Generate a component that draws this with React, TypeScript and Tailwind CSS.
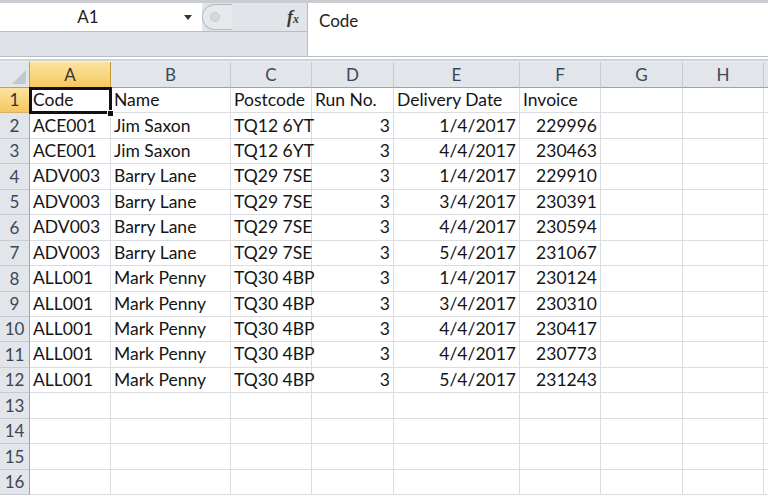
import React from "react";

type Row = {
  code: string;
  name: string;
  post: string;
  run: string;
  date: string;
  inv: string;
};

const cols = [
  { key: "A", w: "w-[81px]" },
  { key: "B", w: "w-[120px]" },
  { key: "C", w: "w-[81px]" },
  { key: "D", w: "w-[82px]" },
  { key: "E", w: "w-[126px]" },
  { key: "F", w: "w-[81px]" },
  { key: "G", w: "w-[82px]" },
  { key: "H", w: "w-[81px]" },
];

const data: Row[] = [
  { code: "ACE001", name: "Jim Saxon", post: "TQ12 6YT", run: "3", date: "1/4/2017", inv: "229996" },
  { code: "ACE001", name: "Jim Saxon", post: "TQ12 6YT", run: "3", date: "4/4/2017", inv: "230463" },
  { code: "ADV003", name: "Barry Lane", post: "TQ29 7SE", run: "3", date: "1/4/2017", inv: "229910" },
  { code: "ADV003", name: "Barry Lane", post: "TQ29 7SE", run: "3", date: "3/4/2017", inv: "230391" },
  { code: "ADV003", name: "Barry Lane", post: "TQ29 7SE", run: "3", date: "4/4/2017", inv: "230594" },
  { code: "ADV003", name: "Barry Lane", post: "TQ29 7SE", run: "3", date: "5/4/2017", inv: "231067" },
  { code: "ALL001", name: "Mark Penny", post: "TQ30 4BP", run: "3", date: "1/4/2017", inv: "230124" },
  { code: "ALL001", name: "Mark Penny", post: "TQ30 4BP", run: "3", date: "3/4/2017", inv: "230310" },
  { code: "ALL001", name: "Mark Penny", post: "TQ30 4BP", run: "3", date: "4/4/2017", inv: "230417" },
  { code: "ALL001", name: "Mark Penny", post: "TQ30 4BP", run: "3", date: "4/4/2017", inv: "230773" },
  { code: "ALL001", name: "Mark Penny", post: "TQ30 4BP", run: "3", date: "5/4/2017", inv: "231243" },
];

function Cell({ w, right, children }: { w: string; right?: boolean; children?: React.ReactNode }) {
  return (
    <div
      className={`${w} shrink-0 h-full border-r border-b border-[#dadcdf] flex items-center px-[3px] whitespace-nowrap ${
        right ? "justify-end" : "justify-start"
      }`}
    >
      {children}
    </div>
  );
}

function RowHead({ n, active }: { n: number; active?: boolean }) {
  return (
    <div
      className={`w-[30px] shrink-0 h-full flex items-center justify-center border-r border-b text-[17px] ${
        active
          ? "bg-gradient-to-b from-[#fbe3a0] to-[#f5c85c] border-r-[#c29a3c] border-b-[#d8b160] text-[#333]"
          : "bg-[#e2e5e9] border-r-[#9aa3ad] border-b-[#c6cbd1] text-[#3b4858]"
      }`}
    >
      {n}
    </div>
  );
}

export default function App() {
  const rows: (Row | null)[] = [
    { code: "Code", name: "Name", post: "Postcode", run: "Run No.", date: "Delivery Date", inv: "Invoice" },
    ...data,
    null,
    null,
    null,
    null,
  ];

  return (
    <div className="w-[768px] h-[499px] overflow-hidden bg-white flex flex-col text-[#151515] font-['Lato',sans-serif] text-[17.5px]">
      <div className="h-[3px] bg-[#c9cdd2] shrink-0" />

      {/* formula bar */}
      <div className="h-[54px] flex shrink-0 border-b border-[#b7bdc4]">
        <div className="w-[308px] flex flex-col shrink-0 border-r border-[#b7bdc4]">
          <div className="h-[29px] flex border-b border-[#b7bdc4]">
            <div className="w-[202px] bg-white flex items-center relative">
              <span className="w-[176px] text-center text-[17px] text-[#222]">A1</span>
              <span className="absolute left-[184px] top-[12px] w-0 h-0 border-l-[4px] border-r-[4px] border-t-[5px] border-l-transparent border-r-transparent border-t-[#333]" />
            </div>
            <div className="flex-1 bg-[#e1e4e8] flex items-center">
              <div className="h-[26px] w-[30px] rounded-l-full border-l border-t border-b border-[#b4bac2] bg-[#e6e9ec] flex items-center pl-[7px]">
                <div className="w-[10px] h-[10px] rounded-full bg-[#d4d8dd] border border-[#c6cbd1]" />
              </div>
              <div className="flex-1 flex justify-end pr-[8px]">
                <span className="font-['Liberation_Serif',serif] italic font-bold text-[18px] text-[#3a3a3a] leading-none">
                  f<span className="text-[12px]">x</span>
                </span>
              </div>
            </div>
          </div>
          <div className="flex-1 bg-[#dfe2e7]" />
        </div>
        <div className="flex-1 bg-white pl-[11px] pt-[5px] text-[17px] text-[#222]">Code</div>
      </div>
      <div className="h-[2px] bg-white shrink-0" />
      <div className="h-[2px] bg-[#cfd3d8] shrink-0" />
      <div className="h-[1px] bg-[#eef0f2] shrink-0" />

      {/* column headers */}
      <div className="h-[26px] flex shrink-0 text-[17px]">
        <div className="w-[30px] shrink-0 bg-[#e2e5e9] border-r border-b border-r-[#9aa3ad] border-b-[#9aa3ad] relative">
          <svg className="absolute right-[3px] bottom-[3px]" width="14" height="14" viewBox="0 0 14 14">
            <polygon points="14,0 14,14 0,14" fill="#c3c8ce" />
          </svg>
        </div>
        {cols.map((c) => (
          <div
            key={c.key}
            className={`${c.w} shrink-0 flex items-center justify-center border-r border-b ${
              c.key === "A"
                ? "bg-gradient-to-b from-[#fbe3a0] to-[#f5c85c] border-r-[#c29a3c] border-b-[#c29a3c] text-[#333]"
                : "bg-[#e2e5e9] border-r-[#c6cbd1] border-b-[#9aa3ad] text-[#3b4858]"
            }`}
          >
            {c.key}
          </div>
        ))}
        <div className="flex-1 bg-[#e2e5e9] border-b border-b-[#9aa3ad]" />
      </div>

      {/* rows */}
      <div className="relative">
        {rows.map((r, i) => (
          <div key={i} className="h-[25.45px] flex shrink-0">
            <RowHead n={i + 1} active={i === 0} />
            <Cell w={cols[0].w}>{r?.code}</Cell>
            <Cell w={cols[1].w}>{r?.name}</Cell>
            <Cell w={cols[2].w}>{r?.post}</Cell>
            <Cell w={cols[3].w} right={i > 0}>
              {r?.run}
            </Cell>
            <Cell w={cols[4].w} right={i > 0}>
              {r?.date}
            </Cell>
            <Cell w={cols[5].w} right={i > 0}>
              {r?.inv}
            </Cell>
            <Cell w={cols[6].w} />
            <Cell w={cols[7].w} />
            <div className="flex-1 h-full border-b border-[#dadcdf]" />
          </div>
        ))}
        <div className="absolute z-10 left-[29px] top-[-1px] w-[83px] h-[27px] border-[3px] border-[#111] pointer-events-none" />
        <div className="absolute z-20 left-[107px] top-[22px] w-[7px] h-[7px] bg-[#111] border border-white" />
      </div>
    </div>
  );
}
